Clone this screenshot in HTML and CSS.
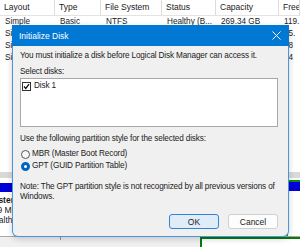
FILE: index.html
```html
<!DOCTYPE html>
<html lang="en">
<head>
    <meta charset="UTF-8">
    <title>Initialize Disk</title>
    <link rel="stylesheet" href="styles.css">
</head>
<body>
    <div class="screen">
        <div class="volumes">
            <div class="vol-row vol-head">
                <div class="cell">Layout</div>
                <div class="cell">Type</div>
                <div class="cell">File System</div>
                <div class="cell">Status</div>
                <div class="cell">Capacity</div>
                <div class="cell">Free</div>
            </div>
            <div class="vol-row">
                <div class="cell">Simple</div>
                <div class="cell">Basic</div>
                <div class="cell">NTFS</div>
                <div class="cell">Healthy (B...</div>
                <div class="cell">269.34 GB</div>
                <div class="cell">119.</div>
            </div>
            <div class="vol-row">
                <div class="cell">Simple</div>
                <div class="cell">Basic</div>
                <div class="cell">NTFS</div>
                <div class="cell">Healthy (P...</div>
                <div class="cell">200.00 GB</div>
                <div class="cell">95.</div>
            </div>
            <div class="vol-row">
                <div class="cell">Simple</div>
                <div class="cell">Basic</div>
                <div class="cell">FAT32</div>
                <div class="cell">Healthy (E...</div>
                <div class="cell">100 MB</div>
                <div class="cell">58</div>
            </div>
            <div class="vol-row">
                <div class="cell">Simple</div>
                <div class="cell">Basic</div>
                <div class="cell">NTFS</div>
                <div class="cell">Healthy (R...</div>
                <div class="cell">529 MB</div>
                <div class="cell">44</div>
            </div>
        </div>

        <div class="splitter"></div>

        <div class="disk-map">
            <div class="disk">
                <div class="part part-left">
                    <div class="stripe"></div>
                    <div class="part-text">
                        <b>System</b>
                        <span>529 MB</span>
                        <span>Healthy</span>
                    </div>
                </div>
                <div class="part part-mid"></div>
                <div class="part part-right">
                    <div class="stripe"></div>
                </div>
            </div>
            <div class="disk disk-next">
                <div class="tick"></div>
                <div class="free-box"></div>
            </div>
        </div>

        <div class="dialog">
            <div class="title-bar">
                <span>Initialize Disk</span>
                <svg class="close" width="9" height="9" viewBox="0 0 9 9">
                    <path d="M0.5 0.5 L8.5 8.5 M8.5 0.5 L0.5 8.5" stroke="#fff" stroke-width="1"/>
                </svg>
            </div>
            <div class="dialog-body">
                <p class="msg">You must initialize a disk before Logical Disk Manager can access it.</p>
                <p class="label">Select disks:</p>
                <div class="disk-list">
                    <label class="check-item">
                        <span class="checkbox">
                            <svg width="7" height="7" viewBox="0 0 7 7">
                                <path d="M1 3.5 L2.8 5.5 L6 1.2" stroke="#111" stroke-width="1.3" fill="none"/>
                            </svg>
                        </span>
                        Disk 1
                    </label>
                </div>
                <p class="label style-label">Use the following partition style for the selected disks:</p>
                <label class="radio-item"><span class="radio"></span>MBR (Master Boot Record)</label>
                <label class="radio-item"><span class="radio radio-on"></span>GPT (GUID Partition Table)</label>
                <p class="note">Note: The GPT partition style is not recognized by all previous versions of Windows.</p>
                <div class="buttons">
                    <button class="btn btn-ok">OK</button>
                    <button class="btn">Cancel</button>
                </div>
            </div>
        </div>
    </div>
</body>
</html>
```

FILE: styles.css
```css
body {
    margin: 0;
    background: #fff;
    font-family: "Liberation Sans", Arial, sans-serif;
    font-size: 8.2px;
    color: #1b1b1b;
}
.screen {
    position: relative;
    width: 300px;
    height: 247px;
    overflow: hidden;
}
.volumes {
    height: 172px;
}
.vol-row {
    display: grid;
    grid-template-columns: 55px 46px 61px 54px 63px 1fr;
    height: 12px;
    line-height: 12px;
}
.vol-row .cell {
    padding-left: 5px;
    white-space: nowrap;
    overflow: hidden;
}
.vol-head {
    height: 15px;
    line-height: 15px;
    border-bottom: 1px solid #e3e3e3;
    font-size: 8.5px;
}
.vol-head .cell {
    border-right: 1px solid #dcdcdc;
    padding-left: 4px;
}
.splitter {
    height: 6px;
    background: #d9d9d9;
}
.disk-map {
    height: 69px;
    background: #fff;
}
.disk {
    display: flex;
    height: 59px;
    padding-top: 5px;
    box-sizing: border-box;
    border-bottom: 1px solid #a9a9a9;
}
.part {
    display: flex;
    flex-direction: column;
}
.part-left {
    width: 60px;
}
.part-mid {
    flex: 1;
}
.part-right {
    width: 12px;
    border-top: 2px solid #0a8a0a;
    border-left: 2px solid #0a8a0a;
    margin-top: -3px;
}
.stripe {
    height: 9px;
    background: #0000d8;
}
.part-text {
    display: flex;
    flex-direction: column;
    padding-top: 3px;
    line-height: 10px;
    font-size: 8.5px;
    margin-left: -12px;
}
.disk-next {
    height: 10px;
    padding-top: 0;
    border-bottom: none;
    background: #f0f0f0;
}
.tick {
    width: 60px;
    border-right: 1px solid #999;
    height: 3px;
}
.free-box {
    margin-left: 139px;
    flex: 1;
    border-top: 2px solid #0a7a0a;
    border-left: 2px solid #0a7a0a;
    background: #fff;
}

/* dialog */
.dialog {
    position: absolute;
    left: 12px;
    top: 25px;
    width: 277px;
    height: 212px;
    box-sizing: border-box;
    border: 1px solid #4a96dc;
    border-top: none;
    border-radius: 0 0 6px 6px;
    background: #f0f0f0;
    box-shadow: 0 2px 6px rgba(0,0,0,0.18);
}
.title-bar {
    display: flex;
    align-items: center;
    justify-content: space-between;
    height: 21px;
    margin: 0 -1px;
    padding: 0 7px;
    background: #0078d4;
    color: #fff;
    font-size: 8.5px;
}
.close {
    margin-right: 1px;
}
.dialog-body {
    display: flex;
    flex-direction: column;
    padding: 5px 10px 0 7px;
    line-height: 10px;
    color: #222;
    letter-spacing: -0.15px;
}
.dialog-body p {
    margin: 0;
}
.label {
    margin-top: 6px !important;
}
.disk-list {
    margin-top: 1px;
    height: 49px;
    box-sizing: border-box;
    background: #fff;
    border: 1px solid #a8a8a8;
    padding: 2px 1px;
}
.check-item {
    display: flex;
    align-items: center;
    gap: 3px;
    height: 10px;
}
.checkbox {
    display: flex;
    align-items: center;
    justify-content: center;
    width: 7px;
    height: 7px;
    border: 1px solid #333;
    background: #fff;
}
.style-label {
    margin-top: 7px !important;
}
.radio-item {
    display: flex;
    align-items: center;
    gap: 2px;
    height: 10px;
    margin-top: 2px;
}
.radio-item:first-of-type {
    margin-top: 5px;
}
.radio {
    width: 7px;
    height: 7px;
    border: 1px solid #555;
    border-radius: 50%;
    background: #f8f8f8;
    margin-left: 1px;
}
.radio-on {
    width: 3px;
    height: 3px;
    border: 3px solid #0067c0;
    background: #fff;
}
.note {
    margin-top: 11px !important;
}
.buttons {
    display: flex;
    justify-content: flex-end;
    gap: 9px;
    margin-top: 12px;
}
.btn {
    width: 50px;
    height: 15px;
    padding: 0;
    font-family: inherit;
    font-size: 8.5px;
    letter-spacing: 0;
    color: #1b1b1b;
    background: #fdfdfd;
    border: 1px solid #d0d0d0;
    border-radius: 3px;
}
.btn-ok {
    background: #e0ecf8;
    border-color: #2f86d6;
}
```
